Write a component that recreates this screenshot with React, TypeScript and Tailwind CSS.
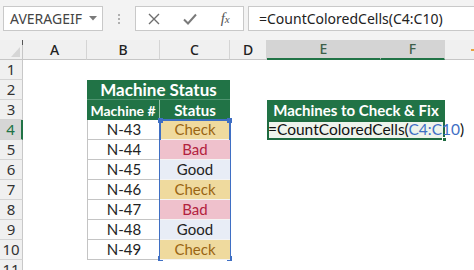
import React from "react";

const UI = { fontFamily: '"Noto Sans", "Open Sans", sans-serif' };
const SHEET = { fontFamily: 'Lato, "Noto Sans", sans-serif' };

type Status = "Check" | "Bad" | "Good";

const statusCls: Record<Status, string> = {
  Check: "bg-[#efda9e] text-[#9a6512]",
  Bad: "bg-[#efc1cc] text-[#b3223e]",
  Good: "bg-[#e8edf6] text-[#222222]",
};

const data: [string, Status][] = [
  ["N-43", "Check"],
  ["N-44", "Bad"],
  ["N-45", "Good"],
  ["N-46", "Check"],
  ["N-47", "Bad"],
  ["N-48", "Good"],
  ["N-49", "Check"],
];

function RowHead({ n, active }: { n: number; active?: boolean }) {
  return (
    <div
      style={UI}
      className={
        "flex items-center justify-center text-[15px] leading-none border-b border-[#d4d4d4] " +
        (active
          ? "bg-[#d6d6d6] text-[#217346] border-r-2 border-r-[#217346]"
          : "bg-[#f0f0f0] text-[#333333] border-r border-r-[#c8c8c8]")
      }
    >
      {n}
    </div>
  );
}

function Blank() {
  return <div className="bg-white" />;
}

function ColHead({ l, sel }: { l: string; sel?: boolean }) {
  return (
    <div
      style={UI}
      className={
        "flex items-center justify-center text-[14px] font-medium leading-none border-r border-[#d4d4d4] " +
        (sel
          ? "bg-[#d4d4d4] text-[#3d5f49] border-b-2 border-b-[#217346]"
          : "bg-[#f0f0f0] text-[#222222] border-b border-b-[#c6c6c6]")
      }
    >
      {l}
    </div>
  );
}

export default function App() {
  return (
    <div className="w-[474px] h-[270px] overflow-hidden bg-white">
      {/* Formula toolbar */}
      <div className="h-[40px] bg-[#f3f3f3] flex items-start pt-[6px]" style={UI}>
        <div className="ml-[3px] w-[100px] h-[25px] bg-white border border-[#c9c9c9] flex items-center justify-between pl-[6px] pr-[5px]">
          <span className="text-[14px] text-[#444444] leading-none">AVERAGEIF</span>
          <svg width="8" height="5" viewBox="0 0 8 5">
            <polygon points="0,0 8,0 4,4.5" fill="#7a7a7a" />
          </svg>
        </div>
        <div className="w-[32px] h-[25px] flex flex-col items-center justify-center gap-[2px]">
          <div className="w-[2px] h-[2px] bg-[#b0b0b0]" />
          <div className="w-[2px] h-[2px] bg-[#b0b0b0]" />
          <div className="w-[2px] h-[2px] bg-[#b0b0b0]" />
        </div>
        <div className="w-[109px] h-[25px] bg-white border border-[#c9c9c9] flex items-center">
          <div className="w-[36px] flex justify-center">
            <svg width="12" height="12" viewBox="0 0 12 12">
              <path d="M1 1 L11 11 M11 1 L1 11" stroke="#6e6e6e" strokeWidth="1.4" />
            </svg>
          </div>
          <div className="w-[36px] flex justify-center">
            <svg width="14" height="12" viewBox="0 0 14 12">
              <path d="M1 6.5 L5 10.5 L13 1.5" stroke="#7a7a7a" strokeWidth="2" fill="none" />
            </svg>
          </div>
          <div className="w-[36px] flex justify-center">
            <span
              className="italic text-[15px] text-[#555555] leading-none"
              style={{ fontFamily: '"Liberation Serif", serif' }}
            >
              f<span className="text-[11px]">x</span>
            </span>
          </div>
        </div>
        <div className="ml-[4px] flex-1 h-[25px] bg-white border-y border-l border-[#c9c9c9] flex items-center pl-[10px]">
          <span className="text-[14px] text-[#222222] leading-none whitespace-nowrap">
            =CountColoredCells(C4:C10)
          </span>
        </div>
      </div>

      {/* Sheet grid */}
      <div className="grid grid-cols-[23px_64px_73px_70px_37px_114px_64px_1fr] auto-rows-[20px]" style={SHEET}>
        {/* header row */}
        <div className="relative bg-[#f0f0f0] border-r border-b border-[#c6c6c6]">
          <svg className="absolute right-[2px] bottom-[2px]" width="9" height="10" viewBox="0 0 9 10">
            <polygon points="9,0 9,10 0,10" fill="#d6d6d6" />
          </svg>
          <div className="absolute right-[-1px] top-0 w-[1px] h-[5px] bg-[#555555]" />
        </div>
        <ColHead l="A" />
        <ColHead l="B" />
        <ColHead l="C" />
        <ColHead l="D" />
        <ColHead l="E" sel />
        <ColHead l="F" sel />
        <div className="relative bg-[#f0f0f0] border-b border-[#c6c6c6]">
          <div className="absolute right-0 top-[9px] w-[3px] h-[2px] bg-[#e8a040]" />
        </div>

        {/* row 1 */}
        <RowHead n={1} />
        <Blank /><Blank /><Blank /><Blank /><Blank /><Blank /><Blank />

        {/* row 2 */}
        <RowHead n={2} />
        <Blank />
        <div className="col-span-2 bg-[#217346] text-white font-bold text-[17px] flex items-center justify-center border-b border-[#4f9470]">
          Machine Status
        </div>
        <Blank /><Blank /><Blank /><Blank />

        {/* row 3 */}
        <RowHead n={3} />
        <Blank />
        <div className="bg-[#217346] text-white font-bold text-[14px] flex items-center justify-center border-r border-[#8fbfa3]">
          Machine #
        </div>
        <div className="bg-[#217346] text-white font-bold text-[15px] flex items-center justify-center">
          Status
        </div>
        <Blank />
        <div className="col-span-2 bg-[#217346] text-white font-bold text-[15px] flex items-center justify-center">
          Machines to Check &amp; Fix
        </div>
        <Blank />

        {/* rows 4-10 */}
        {data.map(([m, s], i) => (
          <React.Fragment key={m}>
            <RowHead n={i + 4} active={i === 0} />
            <Blank />
            <div className="bg-white border-l border-b border-[#c4c4c4] text-[15px] text-[#222222] flex items-center justify-center">
              {m}
            </div>
            <div
              className={
                "relative border-b border-[#f4f4f4] text-[15px] flex items-center justify-center " + statusCls[s]
              }
            >
              {s}
              {i === 0 && (
                <div className="absolute left-[-1px] top-[-1px] w-[72px] h-[141px] border-2 border-[#3f6fc4] pointer-events-none">
                  <div className="absolute left-[-3px] top-[-3px] w-[5px] h-[5px] bg-[#3f6fc4]" />
                  <div className="absolute right-[-3px] top-[-3px] w-[5px] h-[5px] bg-[#3f6fc4]" />
                  <div className="absolute left-[-3px] bottom-[-3px] w-[5px] h-[5px] bg-[#3f6fc4]" />
                  <div className="absolute right-[-3px] bottom-[-3px] w-[5px] h-[5px] bg-[#3f6fc4]" />
                </div>
              )}
            </div>
            <Blank />
            {i === 0 ? (
              <div className="relative col-span-2 bg-[#eef3ec] border-2 border-[#1e6b40] flex items-center text-[15.5px] text-[#111111] whitespace-nowrap overflow-visible">
                <span className="-ml-[1px]">
                  =CountColoredCells(<span className="text-[#3f6fc4]">C4:C10</span>)
                </span>
                <div className="absolute right-[-4px] bottom-[-4px] w-[5px] h-[5px] bg-[#1e6b40] border border-white" />
              </div>
            ) : (
              <>
                <Blank />
                <Blank />
              </>
            )}
            <Blank />
          </React.Fragment>
        ))}

        {/* row 11 */}
        <RowHead n={11} />
        <Blank /><Blank /><Blank /><Blank /><Blank /><Blank /><Blank />
      </div>
    </div>
  );
}
